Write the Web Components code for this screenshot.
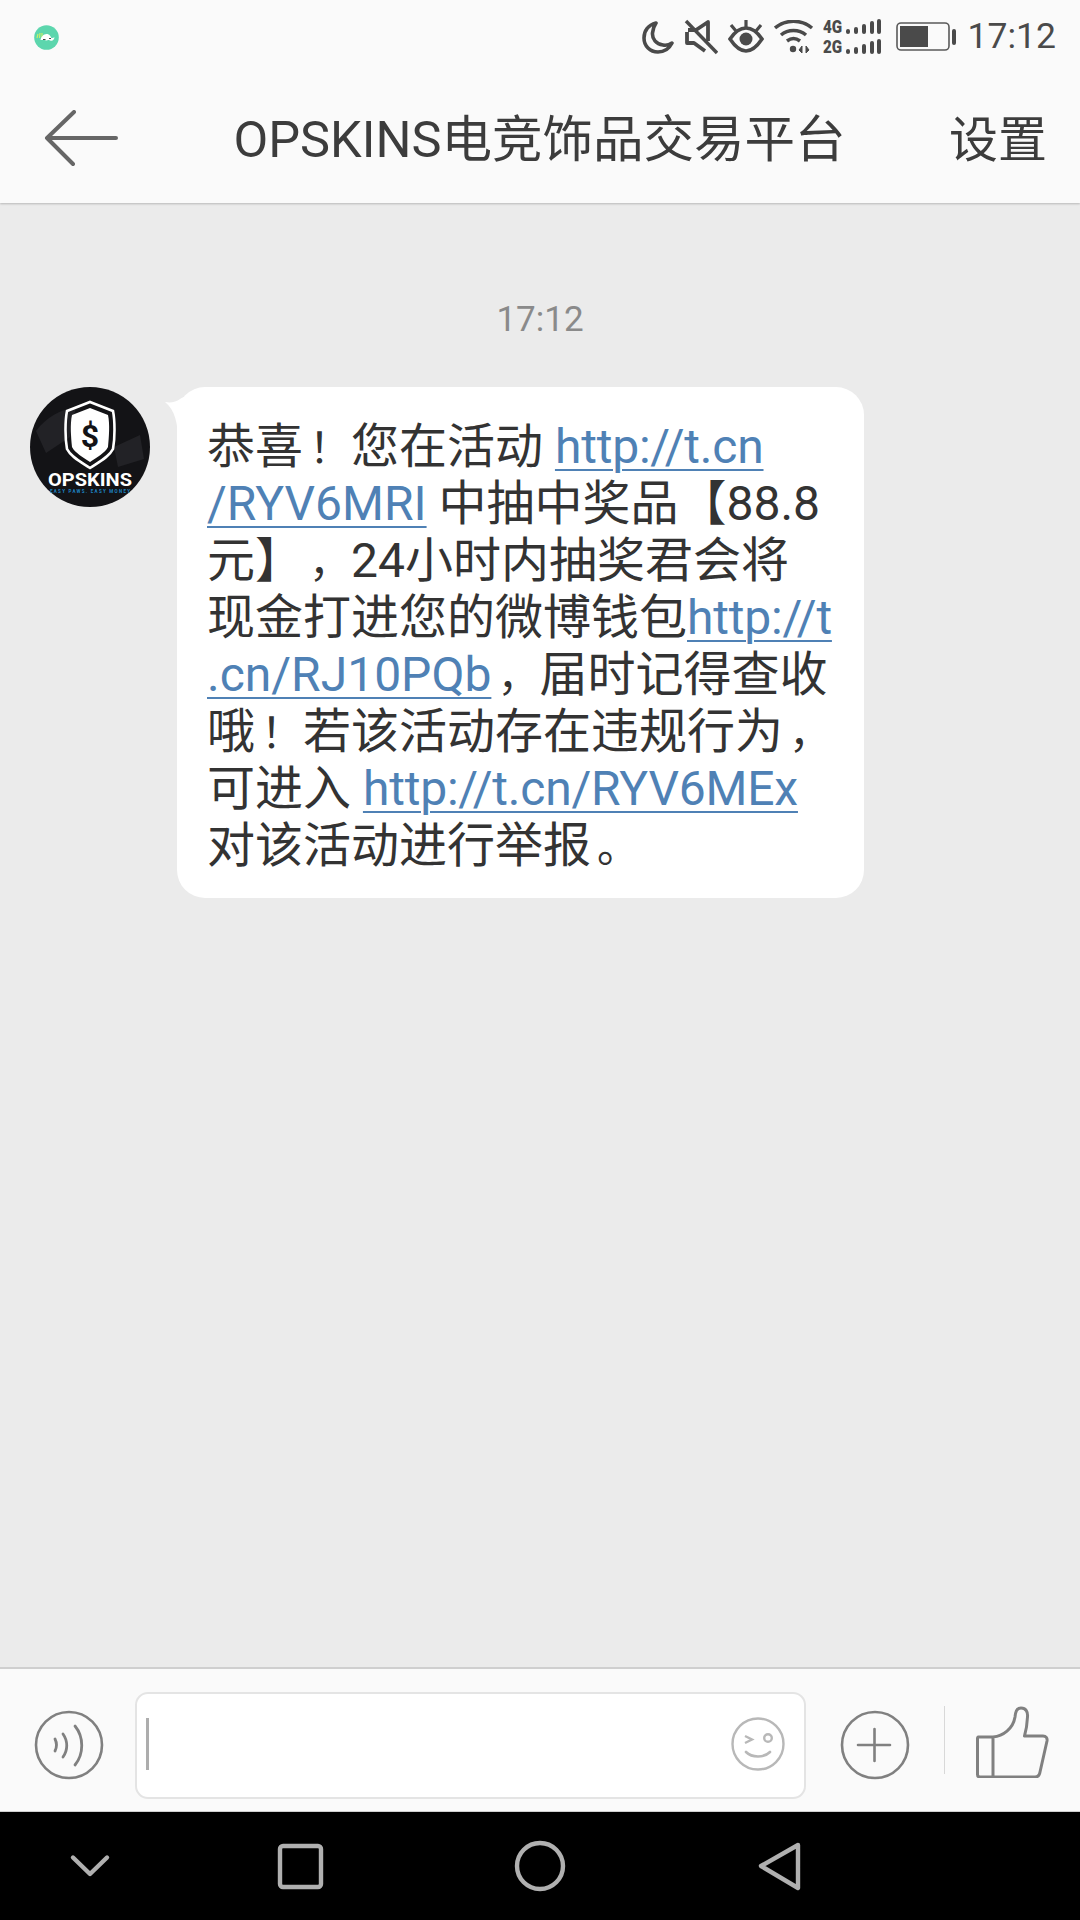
<!DOCTYPE html>
<html lang="zh-CN">
<head>
<meta charset="utf-8">
<title>OPSKINS</title>
<style>
  html, body { margin: 0; padding: 0; }
  body { width: 1080px; height: 1920px; overflow: hidden; font-family: Roboto, "Noto Sans CJK SC", sans-serif; text-spacing-trim: space-all; }
  sms-screen { height: 1920px; }
</style>
</head>
<body>
<sms-screen>
  <status-bar slot="status"></status-bar>
  <title-bar slot="title" heading="OPSKINS电竞饰品交易平台" action="设置"></title-bar>
  <chat-time>17:12</chat-time>
  <chat-message>恭喜<msg-punct>！</msg-punct>您在活动 <msg-link>http://t.cn</msg-link><br><msg-link wide>/RYV6MRI</msg-link> 中抽中奖品【88.8<br>元】<msg-punct>，</msg-punct>24小时内抽奖君会将<br>现金打进您的微博钱包<msg-link>http://t</msg-link><br><msg-link wide>.cn/RJ10PQb</msg-link><msg-punct>，</msg-punct>届时记得查收<br>哦<msg-punct>！</msg-punct>若该活动存在违规行为<msg-punct>，</msg-punct><br>可进入 <msg-link>http://t.cn/RYV6MEx</msg-link><br>对该活动进行举报<msg-punct>。</msg-punct></chat-message>
  <chat-composer slot="composer"></chat-composer>
  <nav-bar slot="nav"></nav-bar>
</sms-screen>

<script>
  // Small helper: every component stamps its markup into an open shadow root.
  class Base extends HTMLElement {
    constructor() {
      super();
      this.attachShadow({ mode: 'open' }).innerHTML = this.markup();
    }
    markup() { return ''; }
  }

  class SmsScreen extends Base {
    markup() {
      return `<style>
        :host { display: flex; flex-direction: column; width: 1080px; background: #ebebeb; }
        main { flex: 1; min-height: 0; display: flex; flex-direction: column; }
      </style>
      <slot name="status"></slot>
      <slot name="title"></slot>
      <main><slot></slot></main>
      <slot name="composer"></slot>
      <slot name="nav"></slot>`;
    }
  }

  class StatusBar extends Base {
    markup() {
      return `<style>
        :host { display: flex; align-items: center; height: 74px; background: #fafafa; padding: 0 24px 0 34px; color: #444; }
        .app { width: 25px; height: 25px; display: block; margin-right: auto; }
        svg { display: block; flex: none; }
        .time { font: 400 35.500px/1 Roboto, sans-serif; color: #4a4a4a; margin-left: 12px; }
        .r { display: flex; align-items: center; }
        .sim { display: grid; grid-template-columns: 23px 35px; grid-auto-rows: 20px; margin-right: 15px; align-items: center; }
        .sim span { display: block; font: 900 19px/20px Roboto, sans-serif; color: #4a4a4a; transform: scaleX(.8); transform-origin: left center; }
      </style>
      <svg class="app" viewBox="0 0 25 25">
        <circle cx="12.5" cy="12.5" r="12.3" fill="#5cd6ad"/>
        <path d="M3 13l1-4M5.5 13l.5-5M8 13V8" stroke="#c8f06a" stroke-width="1.2" fill="none"/>
        <path d="M6.5 15c.5-3 3-6 6-6 3.200 0 4 2.500 5 4 1 .3 2-.2 3-.8-.3 2.200-1.500 3.500-3 3.600-1.500 0-2-1.400-3.300-.7-1 .5-2.700.5-3.700-.1-1.500-.3-2.800.4-4-.1z" fill="#fff"/>
        <path d="M9 14.500h2.500M15 13.500h2" stroke="#444" stroke-width="1.200"/>
      </svg>
      <div class="r">
        <svg width="32" height="34" viewBox="0 0 32 34" style="margin-right:10px">
          <path d="M14 3C6 5 2 11 2 18c0 8 6 14 14 14 6 0 11-3 14-9-3 2-6 2.500-9 2-7-1-11-6-10.500-12 .2-3 1.500-7 3.500-10z" fill="none" stroke="#4a4a4a" stroke-width="3.600" stroke-linejoin="round"/>
        </svg>
        <svg width="34" height="36" viewBox="0 0 34 36" style="margin-right:10px">
          <path d="M3 13v11h7l11 8M24 22V3l-12 8H4" fill="none" stroke="#4a4a4a" stroke-width="3.800" stroke-linejoin="round"/>
          <path d="M2 2l31 32" stroke="#4a4a4a" stroke-width="3.400"/>
        </svg>
        <svg width="36" height="34" viewBox="0 0 36 34" style="margin-right:10px">
          <path d="M2 19C8 10 13 8 18 8s10 2 16 11c-6 9-11 12-16 12S8 28 2 19z" fill="none" stroke="#4a4a4a" stroke-width="3.600"/>
          <circle cx="18" cy="19" r="6.500" fill="#4a4a4a"/>
          <path d="M18 0v7M3 5l5 6M33 5l-5 6" stroke="#4a4a4a" stroke-width="3.200"/>
        </svg>
        <svg width="40" height="34" viewBox="0 0 40 34" style="margin-right:9px">
          <path d="M1 8c11-9 26-9 37 0M7 15c7-6 18-6 25 0M13 21c4-3 9-3 13 0" fill="none" stroke="#4a4a4a" stroke-width="3.500"/>
          <circle cx="19" cy="29" r="3.200" fill="#4a4a4a"/>
          <path d="M28 26v7l-3-3zM32 26v7l3-3z" fill="#4a4a4a" stroke="#4a4a4a" stroke-width="1"/>
        </svg>
        <div class="sim">
          <span>4G</span>
          <svg width="35" height="16" viewBox="23 0 35 16" fill="#4a4a4a"><rect x="23" y="10" width="4" height="5" rx="2"/><rect x="31" y="8" width="4" height="7" rx="2"/><rect x="39" y="5" width="4" height="10" rx="2"/><rect x="47" y="2" width="4" height="13" rx="2"/><rect x="54" y="0" width="4" height="15" rx="2"/></svg>
          <span>2G</span>
          <svg width="35" height="16" viewBox="23 0 35 16" fill="#4a4a4a"><rect x="23" y="10" width="4" height="5" rx="2"/><rect x="31" y="8" width="4" height="7" rx="2"/><rect x="39" y="5" width="4" height="10" rx="2"/><rect x="47" y="2" width="4" height="13" rx="2"/><rect x="54" y="0" width="4" height="15" rx="2"/></svg>
        </div>
        <svg width="60" height="30" viewBox="0 0 60 30">
          <rect x="1" y="1" width="52" height="27" rx="4" fill="none" stroke="#5a5a5a" stroke-width="1.600"/>
          <rect x="4" y="4" width="28" height="21" fill="#4a4a4a"/>
          <rect x="56" y="7" width="4" height="16" rx="2" fill="#4a4a4a"/>
        </svg>
        <span class="time">17:12</span>
      </div>`;
    }
  }

  class TitleBar extends Base {
    markup() {
      return `<style>
        :host { position: relative; display: flex; align-items: center; height: 129px; box-sizing: border-box; padding: 0 33px 0 44px; background: #fafafa; box-shadow: 0 1px 2px rgba(0,0,0,.22); clip-path: inset(0 0 -6px 0); color: #3c3c3c; font-family: Roboto, "Noto Sans CJK SC", sans-serif; text-spacing-trim: space-all; }
        svg { flex: none; display: block; }
        h1 { flex: 1; margin: 4px 0 0; font-weight: 400; font-size: 50.5px; line-height: 1; text-align: center; white-space: nowrap; padding-left: 12px; }
        .act { flex: none; font-size: 49px; line-height: 1; margin-top: 4px; }
      </style>
      <svg width="74" height="58" viewBox="0 0 74 58">
        <path d="M72 28H3M30 2L3 28l26 26" fill="none" stroke="#666" stroke-width="4" stroke-linecap="round" stroke-linejoin="round"/>
      </svg>
      <h1></h1>
      <span class="act"></span>`;
    }
    connectedCallback() {
      this.shadowRoot.querySelector('h1').textContent = this.getAttribute('heading');
      this.shadowRoot.querySelector('.act').textContent = this.getAttribute('action');
    }
  }

  class ChatTime extends Base {
    markup() {
      return `<style>
        :host { display: block; padding-top: 97px; text-align: center; font: 400 35px/40px Roboto, sans-serif; color: #8a8a8a; }
      </style><slot></slot>`;
    }
  }

  class ChatMessage extends Base {
    markup() {
      return `<style>
        :host { display: flex; align-items: flex-start; margin: 47px 0 0 30px; }
        .avatar { flex: none; width: 120px; height: 120px; display: block; margin-right: 27px; }
        .bubble { position: relative; width: 687px; box-sizing: border-box; padding: 31px 24px 24px 30px; background: #fff; border-radius: 28px; font: 400 48px/57px Roboto, "Noto Sans CJK SC", sans-serif; color: #333; white-space: nowrap; text-spacing-trim: space-all; }
        .tail { position: absolute; left: -12px; top: 9px; }
      </style>
      <svg class="avatar" viewBox="0 0 120 120">
        <circle cx="60" cy="60" r="60" fill="#131316"/>
        <path d="M6 44c10-14 26-22 40-24l-6 30-24 16z M84 60l26-12 4 24-26 8z" fill="#222226"/>
        <path d="M60 15l23 9c2 10 2 27 0 38-4 8-14 13-23 19-9-6-19-11-23-19-2-11-2-28 0-38z" fill="none" stroke="#fff" stroke-width="2.600"/>
        <path d="M60 21l18 7c2 9 1 22 0 32-3 6-11 10-18 15-7-5-15-9-18-15-1-10-2-23 0-32z" fill="#fff"/>
        <text x="60" y="60" text-anchor="middle" font-family="Roboto, sans-serif" font-weight="700" font-size="32" fill="#131316">$</text>
        <text x="60" y="99" text-anchor="middle" font-family="Roboto, sans-serif" font-weight="700" font-size="19" textLength="84" lengthAdjust="spacingAndGlyphs" fill="#fff">OPSKINS</text>
        <text x="60" y="106" text-anchor="middle" font-family="Roboto, sans-serif" font-weight="700" font-size="4.500" textLength="80" fill="#1d86c4">EASY PAWS. EASY MONEY</text>
      </svg>
      <div class="bubble">
        <svg class="tail" width="30" height="44" viewBox="0 0 30 44">
          <path d="M0 6c6 1 11 0 15-3 4-3 10-3 15-3v44H13C13 28 10 14 0 6z" fill="#fff"/>
        </svg>
        <slot></slot>
      </div>`;
    }
  }

  class MsgLink extends Base {
    markup() {
      return `<style>
        :host { color: #4f81b5; letter-spacing: -0.2px; text-decoration: underline; text-decoration-thickness: 2px; text-underline-offset: 6px; }
        :host([wide]) { letter-spacing: 0; }
      </style><slot></slot>`;
    }
  }

  // Full-width punctuation sits nearer the middle of its 48px cell than the font draws it.
  class MsgPunct extends Base {
    markup() {
      return `<style>
        :host { display: inline-block; box-sizing: border-box; width: 48px; padding-left: 6px; font-size: 42px; line-height: 1; }
      </style><slot></slot>`;
    }
  }

  class ChatComposer extends Base {
    markup() {
      return `<style>
        :host { display: flex; align-items: center; box-sizing: border-box; height: 145px; padding: 10px 23px 0 34px; background: #fafafa; border-top: 2px solid #cfcfcf; border-bottom: 1px solid #cfcfcf; }
        svg { display: block; flex: none; }
        .field { flex: none; box-sizing: border-box; width: 671px; height: 107px; margin-left: 31px; display: flex; align-items: center; justify-content: space-between; padding: 0 19px 2px 9px; background: #fff; border: 2px solid #e4e4e4; border-radius: 13px; }
        .caret { width: 3px; height: 52px; background: #adadad; }
        .rule { width: 1px; height: 68px; background: #d8d8d8; margin: -10px 31px 0 34px; flex: none; }
        .thumb { margin: -6px 0 0 -1px; }
      </style>
      <svg width="70" height="70" viewBox="0 0 70 70">
        <circle cx="35" cy="35" r="33" fill="none" stroke="#808080" stroke-width="2.600"/>
        <path d="M21 29c2 4 2 8 0 12M29 24c5 7 5 16 0 23M41 16c9 11 9 28 0 39" fill="none" stroke="#808080" stroke-width="2.800" stroke-linecap="round"/>
      </svg>
      <div class="field">
        <span class="caret"></span>
        <svg width="54" height="54" viewBox="0 0 54 54">
          <circle cx="27" cy="27" r="25.500" fill="none" stroke="#b8b8b8" stroke-width="2.400"/>
          <path d="M14 19l7 3.500-7 3.500" fill="none" stroke="#b8b8b8" stroke-width="2.400"/>
          <circle cx="37" cy="21" r="3.800" fill="none" stroke="#b8b8b8" stroke-width="2.400"/>
          <path d="M15 35c6 6 18 6 24 0" fill="none" stroke="#b8b8b8" stroke-width="2.600" stroke-linecap="round"/>
        </svg>
      </div>
      <svg width="70" height="70" viewBox="0 0 70 70" style="margin-left:34px">
        <circle cx="35" cy="35" r="33" fill="none" stroke="#808080" stroke-width="2.600"/>
        <path d="M18 35h32M34.500 19v32" stroke="#808080" stroke-width="2.600" stroke-linecap="round"/>
      </svg>
      <span class="rule"></span>
      <svg class="thumb" width="74" height="72" viewBox="0 0 74 72">
        <path d="M3 31h15v40H5c-1.500 0-2.500-1-2.500-2.500V32.500C2.500 31.500 3 31 4 31zM18 31c10-1 20-8 22-20 .5-4 1-9 6-9 5 0 7 4 6.500 9-.3 6-1.500 14-3 19H68c3 0 4.500 2 4 5l-7 31c-.5 3-2 5-5 5H18" fill="none" stroke="#808080" stroke-width="3" stroke-linejoin="round"/>
      </svg>`;
    }
  }

  class NavBar extends Base {
    markup() {
      return `<style>
        :host { flex: none; display: block; height: 108px; background: #000; }
        svg { display: block; }
      </style>
      <svg width="1080" height="108" viewBox="0 0 1080 108">
        <g fill="none" stroke="#b0b0b0" stroke-width="4.400" stroke-linejoin="round" stroke-linecap="round">
          <path d="M73 45.500l17 16.500 17-16.500"/>
          <rect x="280" y="34" width="41" height="41" rx="3"/>
          <circle cx="540" cy="54" r="23"/>
          <path d="M798 33L761 54l37 22z"/>
        </g>
      </svg>`;
    }
  }

  const tags = { 'sms-screen': SmsScreen, 'status-bar': StatusBar, 'title-bar': TitleBar, 'chat-time': ChatTime,
    'chat-message': ChatMessage, 'msg-link': MsgLink, 'msg-punct': MsgPunct, 'chat-composer': ChatComposer, 'nav-bar': NavBar };
  for (const [name, cls] of Object.entries(tags)) customElements.define(name, cls);
</script>
</body>
</html>
